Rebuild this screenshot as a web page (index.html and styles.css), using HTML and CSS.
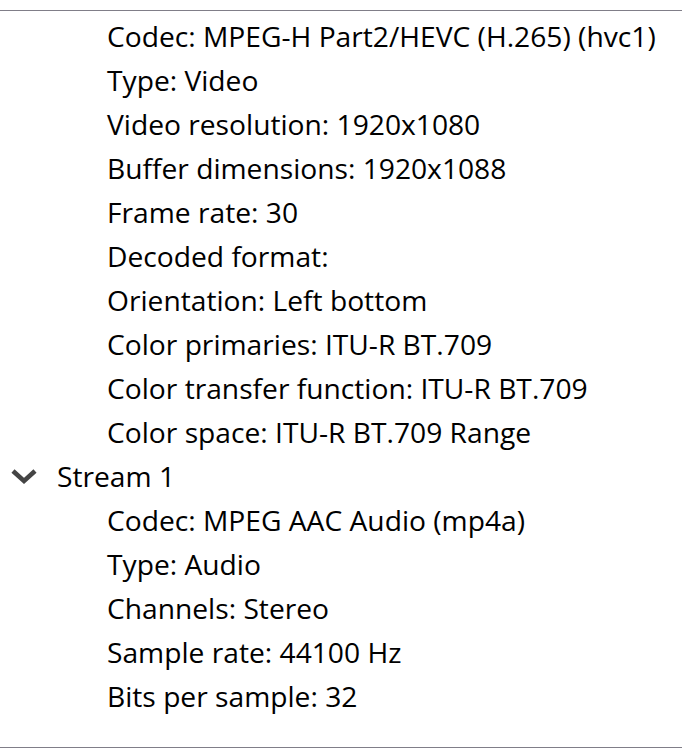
FILE: index.html
```html
<!DOCTYPE html>
<html>
<head>
<meta charset="utf-8">
<link rel="stylesheet" href="styles.css">
</head>
<body>
<div class="tree">
  <div class="row child">Codec: MPEG-H Part2/HEVC (H.265) (hvc1)</div>
  <div class="row child">Type: Video</div>
  <div class="row child">Video resolution: 1920x1080</div>
  <div class="row child">Buffer dimensions: 1920x1088</div>
  <div class="row child">Frame rate: 30</div>
  <div class="row child">Decoded format:</div>
  <div class="row child">Orientation: Left bottom</div>
  <div class="row child">Color primaries: ITU-R BT.709</div>
  <div class="row child">Color transfer function: ITU-R BT.709</div>
  <div class="row child">Color space: ITU-R BT.709 Range</div>
  <div class="row parent">
    <svg class="chev" width="28" height="18" viewBox="0 0 28 18"><path d="M3 4 L14 14 L25 4" fill="none" stroke="#444" stroke-width="4.6"/></svg>
    <span>Stream 1</span>
  </div>
  <div class="row child">Codec: MPEG AAC Audio (mp4a)</div>
  <div class="row child">Type: Audio</div>
  <div class="row child">Channels: Stereo</div>
  <div class="row child">Sample rate: 44100 Hz</div>
  <div class="row child">Bits per sample: 32</div>
</div>
</body>
</html>
```
FILE: styles.css
```css
html, body {
  margin: 0;
  padding: 0;
  background: #ffffff;
}
.tree {
  margin-top: 10px;
  border-top: 1px solid #807e88;
  border-bottom: 1px solid #807e88;
  padding-top: 3px;
  height: 738px;
  box-sizing: border-box;
  font-family: "Open Sans", "Noto Sans", sans-serif;
  font-size: 28.2px;
  color: #000;
}
.row {
  height: 44px;
  line-height: 44px;
  white-space: nowrap;
}
.child {
  padding-left: 107px;
}
.parent {
  display: flex;
  align-items: center;
  padding-left: 10px;
}
.chev {
  width: 28px;
  height: 18px;
  margin-right: 19px;
}
```
